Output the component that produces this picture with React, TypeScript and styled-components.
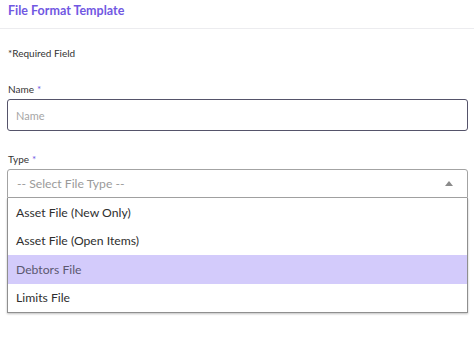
import { useState } from 'react'
import styled, { createGlobalStyle } from 'styled-components'

const Global = createGlobalStyle`
  html, body { margin: 0; padding: 0; background: #fff; }
  body { font-family: "Lato", "Noto Sans", sans-serif; }
  * { box-sizing: border-box; }
`

const Page = styled.div`
  width: 474px;
  height: 353px;
  background: #fff;
`
const Header = styled.div`
  height: 29px;
  padding: 3px 8px 0;
  border-bottom: 1px solid #ececef;
`
const Title = styled.h2`
  margin: 0;
  font-family: "Lato", sans-serif;
  font-size: 12.5px;
  line-height: 16px;
  font-weight: 700;
  color: #7158e2;
`
const Body = styled.div`
  padding: 18px 6px 0 7px;
`
const Required = styled.p`
  margin: 0 0 0 1px;
  font-size: 10px;
  color: #333;
`
const Field = styled.div<{ $top: number }>`
  display: grid;
  gap: 4px;
  margin-top: ${({ $top }) => $top}px;
`
const Label = styled.label`
  margin-left: 1px;
  font-size: 10px;
  color: #333;
  span { color: #7158e2; margin-left: 3px; }
`
const Input = styled.input`
  width: 100%;
  height: 32px;
  padding: 0 8px;
  border: 1px solid #55536a;
  border-radius: 3px;
  font-family: "Lato", sans-serif;
  font-size: 11px;
  color: #333;
  outline: none;
  &::placeholder { color: #a6a6a6; }
`
const SelectWrap = styled.div`
  width: 100%;
`
const SelectBox = styled.div`
  height: 29px;
  border: 1px solid #a3a3a3;
  border-radius: 3px 3px 0 0;
  display: flex;
  align-items: center;
  justify-content: space-between;
  padding: 0 14px 0 9px;
  font-size: 12.2px;
  color: #9a9a9a;
`
const Caret = styled.span`
  width: 0;
  height: 0;
  border-left: 4px solid transparent;
  border-right: 4px solid transparent;
  border-bottom: 5px solid #8a8a8a;
`
const Menu = styled.ul`
  list-style: none;
  margin: 0;
  padding: 0;
  border: 1px solid #8f8f8f;
  border-top: none;
  box-shadow: 0 1px 2px rgba(0, 0, 0, 0.25);
`
const Option = styled.li<{ $active?: boolean }>`
  height: 28.5px;
  display: flex;
  align-items: center;
  padding: 0 8px;
  font-size: 12.2px;
  color: ${({ $active }) => ($active ? '#5b5870' : '#2e2e2e')};
  background: ${({ $active }) => ($active ? '#d3cbfb' : '#fff')};
`

const options = ['Asset File (New Only)', 'Asset File (Open Items)', 'Debtors File', 'Limits File']

export default function App() {
  const [name, setName] = useState('')
  const [active, setActive] = useState(2)

  return (
    <Page>
      <Global />
      <Header>
        <Title>File Format Template</Title>
      </Header>
      <Body>
        <Required>*Required Field</Required>
        <Field $top={24}>
          <Label htmlFor="name">Name<span>*</span></Label>
          <Input id="name" placeholder="Name" value={name} onChange={e => setName(e.target.value)} />
        </Field>
        <Field $top={22}>
          <Label>Type<span>*</span></Label>
          <SelectWrap>
            <SelectBox>
              -- Select File Type --
              <Caret />
            </SelectBox>
            <Menu>
              {options.map((o, i) => (
                <Option key={o} $active={i === active} onMouseEnter={() => setActive(i)}>{o}</Option>
              ))}
            </Menu>
          </SelectWrap>
        </Field>
      </Body>
    </Page>
  )
}
